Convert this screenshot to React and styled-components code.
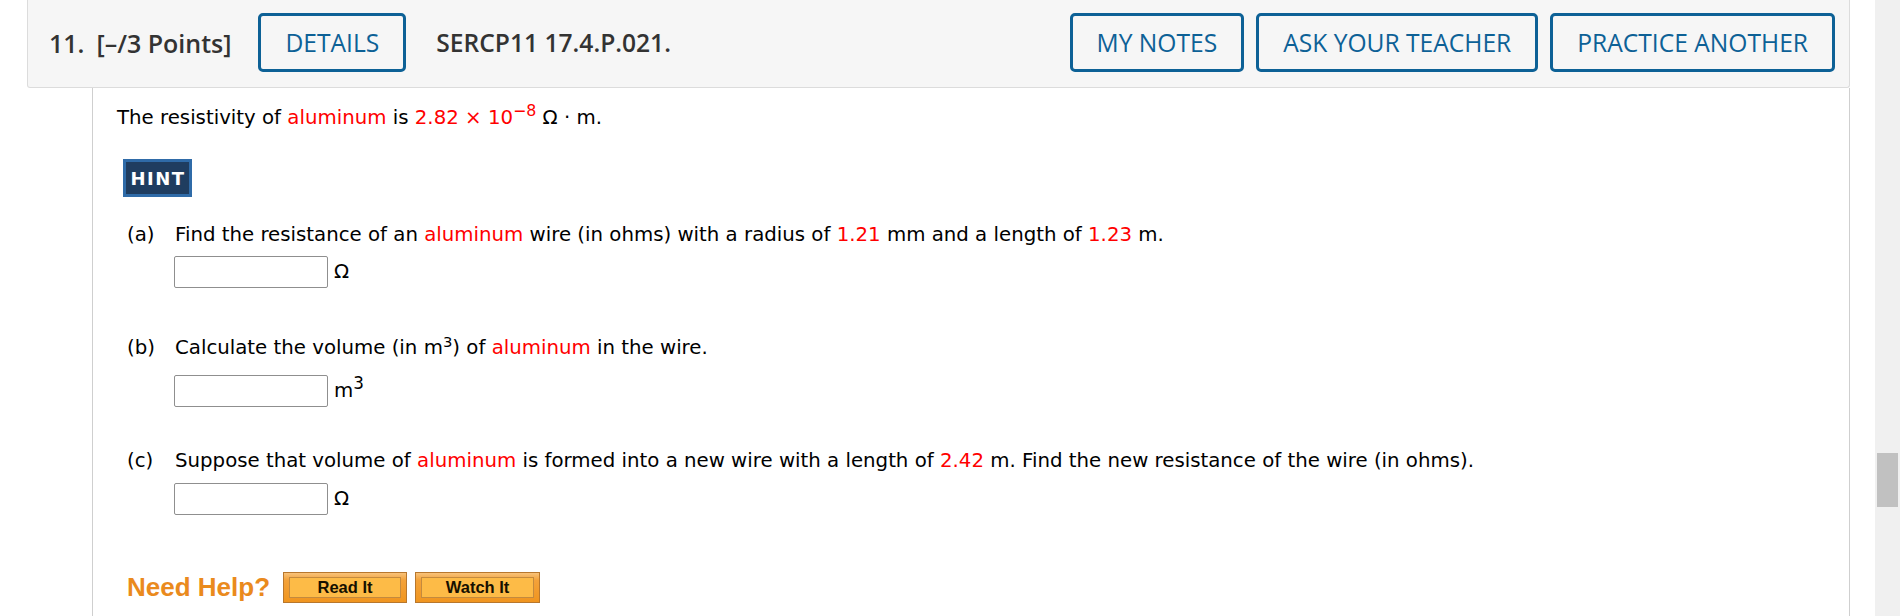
import React from "react";
import styled, { createGlobalStyle } from "styled-components";

const GlobalStyle = createGlobalStyle`
  html, body {
    margin: 0;
    padding: 0;
    background: #fff;
  }
  body {
    overflow: hidden;
  }
`;

const Page = styled.div`
  display: flex;
  width: 1900px;
  height: 616px;
  overflow: hidden;
  background: #fff;
`;

const Main = styled.div`
  flex: 1;
  min-width: 0;
  display: flex;
  flex-direction: column;
`;

const ScrollTrack = styled.div`
  width: 25px;
  flex-shrink: 0;
  background: #f0f0f0;
  display: flex;
  justify-content: center;
  padding-top: 453px;
  box-sizing: border-box;
`;

const ScrollThumb = styled.div`
  width: 21px;
  height: 54px;
  background: #c1c1c1;
`;

/* question header bar */
const Header = styled.div`
  margin: 0 25px 0 27px;
  height: 85px;
  padding: 0 14px 2px 21px;
  background: #f6f6f6;
  border: 1px solid #dcdcdc;
  border-top: none;
  border-radius: 0 0 3px 3px;
  display: flex;
  align-items: center;
  font-family: "Open Sans", "Liberation Sans", sans-serif;
  font-size: 25px;
  color: #333;
`;

const Num = styled.span`
  font-weight: 600;
  margin-right: 12px;
`;

const Points = styled.span`
  font-weight: 600;
  margin-right: 27px;
`;

const Code = styled.span`
  font-weight: 600;
  font-size: 24.6px;
  margin-left: 30px;
`;

const OutlineButton = styled.button`
  height: 59px;
  padding: 0 24px;
  border: 3px solid #0d6196;
  border-radius: 5px;
  background: transparent;
  color: #0d6196;
  font-family: inherit;
  font-size: 24.6px;
  font-weight: 400;
  white-space: nowrap;
  cursor: pointer;
`;

const Actions = styled.div`
  margin-left: auto;
  display: flex;
  gap: 12px;
`;

/* question body */
const Panel = styled.div`
  flex: 1;
  margin: 0 25px 0 92px;
  padding: 16px 0 0 24px;
  border-left: 1px solid #cfcfcf;
  border-right: 1px solid #cfcfcf;
  font-family: "DejaVu Sans", Verdana, sans-serif;
  font-size: 19.75px;
  color: #000;
`;

const Statement = styled.p`
  margin: 0;
  line-height: 28px;
`;

const Red = styled.span`
  color: #ff0000;
`;

const Sup = styled.span`
  font-size: ${(p) => p.$size || 0.8}em;
  position: relative;
  top: -${(p) => p.$raise}px;
  line-height: 0;
`;

const Hint = styled.div`
  margin: 27px 0 0 6px;
  width: 69px;
  height: 38px;
  box-sizing: border-box;
  background: #1f3d60;
  border: 3px solid #2f6ba8;
  color: #fff;
  font-weight: bold;
  font-size: 18px;
  letter-spacing: 1.5px;
  display: flex;
  align-items: center;
  justify-content: center;
  padding-left: 1px;
`;

const Part = styled.div`
  margin-top: ${(p) => p.$top}px;
  padding-left: 10px;
  display: grid;
  grid-template-columns: 48px 1fr;
`;

const Label = styled.span`
  line-height: 28px;
`;

const Prompt = styled.div`
  line-height: 28px;
  white-space: nowrap;
`;

const AnswerRow = styled.div`
  grid-column: 2;
  margin-top: ${(p) => p.$gap}px;
  display: flex;
  align-items: center;
  height: 32px;
`;

const AnswerInput = styled.input`
  width: 154px;
  height: 32px;
  box-sizing: border-box;
  margin: 0 6px 0 -1px;
  border: 1px solid #8f8f8f;
  border-radius: 2px;
  background: #fff;
`;

const Unit = styled.span`
  line-height: 32px;
`;

const HelpRow = styled.div`
  margin-top: 57px;
  padding-left: 10px;
  height: 31px;
  display: flex;
  align-items: center;
  gap: 8px;
`;

const NeedHelp = styled.span`
  font-family: "Liberation Sans", Arial, sans-serif;
  font-weight: bold;
  font-size: 26px;
  color: #ea8a1d;
  margin-right: 5px;
`;

const HelpButton = styled.button`
  width: ${(p) => p.$w}px;
  height: 31px;
  box-sizing: border-box;
  padding: 4px 5px;
  border: 1px solid #b8772d;
  background: linear-gradient(#f8c27a 0%, #f3a23a 25%, #f0951f 100%);
  cursor: pointer;
`;

const Face = styled.span`
  display: flex;
  align-items: center;
  justify-content: center;
  height: 100%;
  box-sizing: border-box;
  background: #fdbb47;
  border: 1px solid #c48a3e;
  font-family: "Liberation Sans", Arial, sans-serif;
  font-weight: bold;
  font-size: 16.5px;
  color: #161000;
`;

const Answer = ({ unit }) => (
  <>
    <AnswerInput type="text" />
    <Unit>{unit}</Unit>
  </>
);

export default function App() {
  return (
    <Page>
      <GlobalStyle />
      <Main>
        <Header>
          <Num>11.</Num>
          <Points>[–/3 Points]</Points>
          <OutlineButton>DETAILS</OutlineButton>
          <Code>SERCP11 17.4.P.021.</Code>
          <Actions>
            <OutlineButton>MY NOTES</OutlineButton>
            <OutlineButton>ASK YOUR TEACHER</OutlineButton>
            <OutlineButton>PRACTICE ANOTHER</OutlineButton>
          </Actions>
        </Header>

        <Panel>
          <Statement>
            The resistivity of <Red>aluminum</Red> is{" "}
            <Red>
              2.82 × 10<Sup $raise={8}>−8</Sup>
            </Red>{" "}
            Ω · m.
          </Statement>

          <Hint>HINT</Hint>

          <Part $top={24}>
            <Label>(a)</Label>
            <Prompt>
              Find the resistance of an <Red>aluminum</Red> wire (in ohms) with a radius of{" "}
              <Red>1.21</Red> mm and a length of <Red>1.23</Red> m.
            </Prompt>
            <AnswerRow $gap={7}>
              <Answer unit="Ω" />
            </AnswerRow>
          </Part>

          <Part $top={46}>
            <Label>(b)</Label>
            <Prompt>
              Calculate the volume (in m<Sup $raise={7} $size={0.75}>3</Sup>) of{" "}
              <Red>aluminum</Red> in the wire.
            </Prompt>
            <AnswerRow $gap={13}>
              <Answer
                unit={
                  <>
                    m<Sup $raise={8} $size={0.85}>3</Sup>
                  </>
                }
              />
            </AnswerRow>
          </Part>

          <Part $top={40}>
            <Label>(c)</Label>
            <Prompt>
              Suppose that volume of <Red>aluminum</Red> is formed into a new wire with a length
              of <Red>2.42</Red> m. Find the new resistance of the wire (in ohms).
            </Prompt>
            <AnswerRow $gap={8}>
              <Answer unit="Ω" />
            </AnswerRow>
          </Part>

          <HelpRow>
            <NeedHelp>Need Help?</NeedHelp>
            <HelpButton $w={124}>
              <Face>Read It</Face>
            </HelpButton>
            <HelpButton $w={125}>
              <Face>Watch It</Face>
            </HelpButton>
          </HelpRow>
        </Panel>
      </Main>
      <ScrollTrack>
        <ScrollThumb />
      </ScrollTrack>
    </Page>
  );
}
